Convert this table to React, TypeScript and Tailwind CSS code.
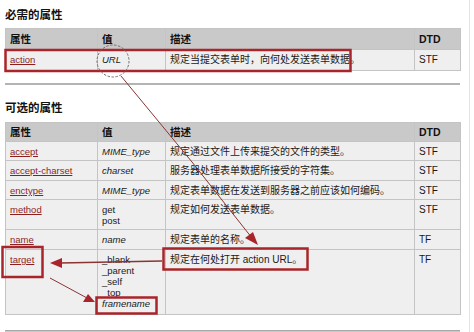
import type { ReactNode } from 'react'

type Attr = {
  name: string
  values: string[]
  italic?: boolean
  desc: ReactNode
  dtd: string
  rowClass: string
}

const required: Attr[] = [
  {
    name: 'action',
    values: ['URL'],
    italic: true,
    desc: '规定当提交表单时，向何处发送表单数据。',
    dtd: 'STF',
    rowClass: 'h-[21px]',
  },
]

const optional: Attr[] = [
  { name: 'accept', values: ['MIME_type'], italic: true, desc: '规定通过文件上传来提交的文件的类型。', dtd: 'STF', rowClass: 'h-[19px]' },
  { name: 'accept-charset', values: ['charset'], italic: true, desc: '服务器处理表单数据所接受的字符集。', dtd: 'STF', rowClass: 'h-[20px]' },
  { name: 'enctype', values: ['MIME_type'], italic: true, desc: '规定表单数据在发送到服务器之前应该如何编码。', dtd: 'STF', rowClass: 'h-[19px]' },
  { name: 'method', values: ['get', 'post'], desc: '规定如何发送表单数据。', dtd: 'STF', rowClass: 'h-[30px]' },
  { name: 'name', values: ['name'], italic: true, desc: '规定表单的名称。', dtd: 'TF', rowClass: 'h-[20px]' },
  {
    name: 'target',
    values: ['_blank', '_parent', '_self', '_top', 'framename'],
    desc: '规定在何处打开 action URL。',
    dtd: 'TF',
    rowClass: 'h-[65px]',
  },
]

function AttrTable({ rows, headClass }: { rows: Attr[]; headClass: string }) {
  const th = 'border border-[#c4c4c4] bg-[#c9c9c9] p-0 px-[4px] text-left align-middle text-[10.5px] leading-[11px] font-bold text-[#111]'
  const td = 'border border-[#c4c4c4] bg-[#efefef] p-0 px-[4px] pt-[4px] align-top text-[#1a1a1a]'
  return (
    <table className="w-[455px] table-fixed border-collapse text-[10px] leading-[11px]">
      <colgroup>
        <col className="w-[92px]" />
        <col className="w-[68px]" />
        <col className="w-[249px]" />
        <col className="w-[46px]" />
      </colgroup>
      <thead>
        <tr className={headClass}>
          <th className={th}>属性</th>
          <th className={th}>值</th>
          <th className={th}>描述</th>
          <th className={th}>DTD</th>
        </tr>
      </thead>
      <tbody>
        {rows.map((r) => (
          <tr key={r.name} className={r.rowClass}>
            <td className={td}>
              <a href="#" className="block text-[9.5px] leading-[11px] text-[#8e1f1f] underline">
                {r.name}
              </a>
            </td>
            <td className={td}>
              {r.values.map((v) => (
                <div key={v} className={`text-[9.5px] leading-[11px] ${r.italic || v === 'framename' ? 'italic' : ''}`}>
                  {v}
                </div>
              ))}
            </td>
            <td className={`${td} text-[10px] leading-[11px]`}>{r.desc}</td>
            <td className={`${td} text-[10px] leading-[11px]`}>{r.dtd}</td>
          </tr>
        ))}
      </tbody>
    </table>
  )
}

// hand-drawn markup layered over the tables
function Marks() {
  const red = '#a8262b'
  return (
    <svg className="pointer-events-none absolute inset-0" width={474} height={332} viewBox="0 0 474 332">
      <g fill="none" stroke={red} strokeWidth={2.5}>
        <rect x={5.5} y={50} width={345} height={21} />
        <rect x={2.5} y={247} width={40} height={30} />
        <rect x={163.5} y={248.5} width={144} height={21} />
        <rect x={96.5} y={297.5} width={60} height={16} />
      </g>
      <ellipse cx={113} cy={61} rx={16} ry={16} fill="none" stroke="#7a6a6a" strokeWidth={1} strokeDasharray="2.5 1.5" />
      <g fill="none" stroke="#8a3434" strokeWidth={1}>
        <polyline points="121,76 192,162 252,238" />
        <line x1={162} y1={261} x2={60} y2={263} strokeWidth={1.3} />
        <line x1={50} y1={278} x2={87} y2={298} />
      </g>
      <g fill={red}>
        <polygon points="258,245 245,238 253,232" />
        <polygon points="50,263 62,258 62,268" />
        <polygon points="95,302 83,302 88,294" />
      </g>
    </svg>
  )
}

export default function App() {
  return (
    <div className="relative h-[332px] w-[474px] overflow-hidden bg-white font-['Liberation_Sans','Noto_Sans_CJK_SC',sans-serif]">
      <div className="h-full w-[470px] border-r border-[#e4e4e4] pl-[5px] pt-[8px]">
        <h2 className="h-[14px] text-[11.5px] leading-[14px] font-bold text-[#111]">必需的属性</h2>
        <div className="mt-[6px]">
          <AttrTable rows={required} headClass="h-[21px]" />
        </div>
        <div className="mt-[12px] h-[2px] w-[455px] bg-[#b4b4b4]" />
        <h2 className="mt-[16px] h-[14px] text-[11.5px] leading-[14px] font-bold text-[#111]">可选的属性</h2>
        <div className="mt-[7px]">
          <AttrTable rows={optional} headClass="h-[19px]" />
        </div>
        <div className="mt-[15px] h-[4px] w-[455px] border-t border-[#a8a8a8] bg-[#c8c8c8]" />
      </div>
      <Marks />
    </div>
  )
}
